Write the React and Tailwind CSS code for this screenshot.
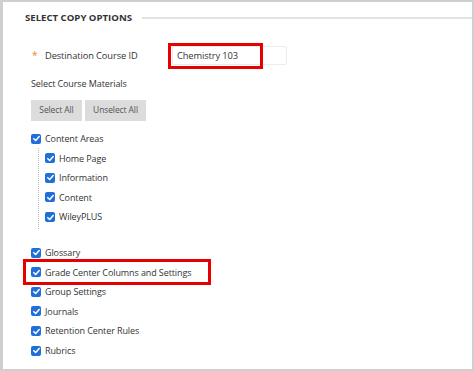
import React from 'react'

function Check() {
    return (
        <span className="inline-flex h-[10px] w-[10px] shrink-0 items-center justify-center rounded-[2px] bg-[#1f6fd8]">
            <svg viewBox="0 0 10 10" className="h-[9px] w-[9px]">
                <path d="M2 5.2 L4.1 7.3 L8 2.8" fill="none" stroke="#fff" strokeWidth="1.7" strokeLinecap="round" strokeLinejoin="round" />
            </svg>
        </span>
    )
}

function Item({ label }) {
    return (
        <div className="flex h-[19.6px] items-center gap-[4px]">
            <Check />
            <span>{label}</span>
        </div>
    )
}

export default function App() {
    const subItems = ['Home Page', 'Information', 'Content', 'WileyPLUS']
    const items = ['Glossary', 'Grade Center Columns and Settings', 'Group Settings', 'Journals', 'Retention Center Rules', 'Rubrics']

    return (
        <div
            className="h-[371px] w-[474px] overflow-hidden border-t-2 border-l-[3px] border-r-2 border-b-2 border-[#cfcfcf] bg-white text-[9px] tracking-[-0.1px] text-[#333]"
            style={{ fontFamily: '"Open Sans", "Noto Sans", sans-serif' }}
        >
            {/* Section header */}
            <div className="flex items-center pt-[9px] pl-[22px]">
                <span className="text-[9.6px] font-bold tracking-[0px] text-[#333]">SELECT COPY OPTIONS</span>
                <div className="ml-[10px] h-[2px] flex-1 bg-[#e2e2e2]" />
            </div>

            {/* Destination */}
            <div className="mt-[21px] flex items-center">
                <span className="ml-[29px] w-[13px] text-[10px] text-[#e8893a]">*</span>
                <span className="w-[127px] text-[9.3px]">Destination Course ID</span>
                <div className="relative flex h-[19px] w-[115px] items-center rounded-[2px] border border-[#ececec]">
                    <div className="absolute -left-[5px] -top-[4px] h-[26px] w-[95px] border-[3px] border-[#e60000]" />
                    <span className="pl-[4px] text-[9.3px]">Chemistry 103</span>
                </div>
            </div>

            <div className="mt-[12px] pl-[28px]">Select Course Materials</div>

            <div className="mt-[9px] flex gap-[3px] pl-[28px] text-[8.5px] text-[#555]">
                <div className="flex h-[21px] w-[51px] items-center justify-center bg-[#dcdcdc]">Select All</div>
                <div className="flex h-[21px] w-[61px] items-center justify-center bg-[#dcdcdc]">Unselect All</div>
            </div>

            {/* Content areas */}
            <div className="mt-[8px] pl-[28px]">
                <Item label="Content Areas" />
                <div className="ml-[7px] border-l border-dotted border-[#bbb] pl-[6px] pb-[2px]">
                    {subItems.map((s) => (
                        <Item key={s} label={s} />
                    ))}
                </div>
            </div>

            <div className="mt-[14px] pl-[28px]">
                {items.map((s) => (
                    <div key={s} className="relative">
                        {s.startsWith('Grade') && (
                            <div className="absolute -left-[8px] -top-[3px] h-[26px] w-[188px] border-[3px] border-[#e60000]" />
                        )}
                        <Item label={s} />
                    </div>
                ))}
            </div>
        </div>
    )
}
